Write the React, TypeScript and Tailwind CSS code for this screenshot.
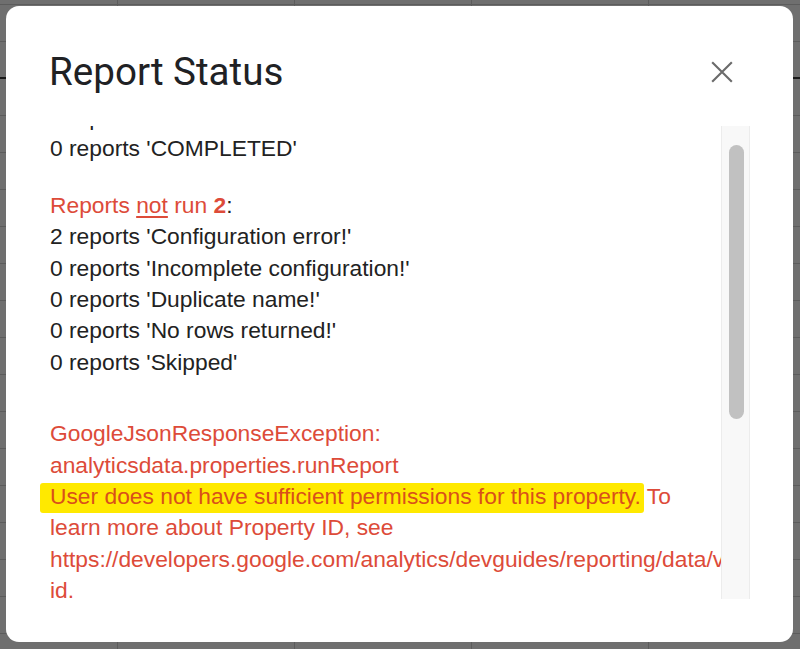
import React from 'react';

// --- Report status dialog over a dimmed spreadsheet ---

const BLACK = 'text-[#222222]';
const RED = 'text-[#dd4b39]';

const StatusLine: React.FC<{ children: React.ReactNode; red?: boolean }> = ({ children, red }) => (
  <div className={`whitespace-nowrap ${red ? RED : BLACK}`}>{children}</div>
);

const CloseIcon = () => (
  <svg viewBox="0 0 24 24" className="w-[34px] h-[34px]" fill="none" stroke="#6b6b6b" strokeWidth={1.5} strokeLinecap="square">
    <path d="M5.6 5.6L18.4 18.4M18.4 5.6L5.6 18.4" />
  </svg>
);

export default function App() {
  return (
    <div className="w-[800px] h-[649px] overflow-hidden bg-[#6f6f6f] bg-[image:linear-gradient(to_bottom,transparent_77px,#1a1a1a_77px,#1a1a1a_79px,transparent_79px),repeating-linear-gradient(to_right,transparent_0,transparent_117px,#5c5c5c_117px,#5c5c5c_118px,transparent_118px,transparent_177px),repeating-linear-gradient(to_bottom,transparent_0,transparent_4px,#5c5c5c_4px,#5c5c5c_5px,transparent_5px,transparent_37px)] pt-[6px] pl-[6px]">
      <div className="w-[787px] h-[636px] bg-white rounded-[13px] flex flex-col">
        {/* header */}
        <div className="flex items-center justify-between pt-[46px] pl-[43px] pr-[54px]">
          <h1 className="font-['Roboto',sans-serif] text-[38.6px] leading-[40px] text-[#202124] font-normal">Report Status</h1>
          <CloseIcon />
        </div>

        {/* scrolling body */}
        <div className="flex mt-[34px] h-[473px] pl-[34px] pr-[43px]">
          <div className="flex-1 overflow-hidden pl-[10px] font-['Liberation_Sans',Arial,sans-serif] text-[22.8px] leading-[31.4px]">
            <div className="-mt-[24px]">
              <StatusLine>0 reports 'RUNNING'</StatusLine>
              <StatusLine>0 reports 'COMPLETED'</StatusLine>

              <div className="mt-[25px]">
                <StatusLine>
                  <span className={RED}>
                    Reports <span className="underline decoration-[1.5px] underline-offset-[3px]">not</span> run <b>2</b>
                  </span>
                  :
                </StatusLine>
                <StatusLine>2 reports 'Configuration error!'</StatusLine>
                <StatusLine>0 reports 'Incomplete configuration!'</StatusLine>
                <StatusLine>0 reports 'Duplicate name!'</StatusLine>
                <StatusLine>0 reports 'No rows returned!'</StatusLine>
                <StatusLine>0 reports 'Skipped'</StatusLine>
              </div>

              <div className="mt-[40px]">
                <StatusLine red>GoogleJsonResponseException:</StatusLine>
                <StatusLine red>analyticsdata.properties.runReport</StatusLine>
                <StatusLine red>
                  <span className="bg-[#ffe900] text-[#d9501a] -ml-[10px] pl-[10px] pr-[3px] -mr-[3px] pb-[4px] rounded-[3px]">
                    User does not have sufficient permissions for this property.
                  </span>{' '}
                  To
                </StatusLine>
                <StatusLine red>learn more about Property ID, see</StatusLine>
                <StatusLine red>https://developers.google.com/analytics/devguides/reporting/data/v1/property-</StatusLine>
                <StatusLine red>id.</StatusLine>
              </div>
            </div>
          </div>

          {/* scrollbar */}
          <div className="w-[29px] h-full bg-[#f8f8f8] border-x border-[#ececec] pl-[7px] pt-[19px]">
            <div className="w-[15px] h-[274px] rounded-full bg-[#c1c1c1]" />
          </div>
        </div>
      </div>
    </div>
  );
}
